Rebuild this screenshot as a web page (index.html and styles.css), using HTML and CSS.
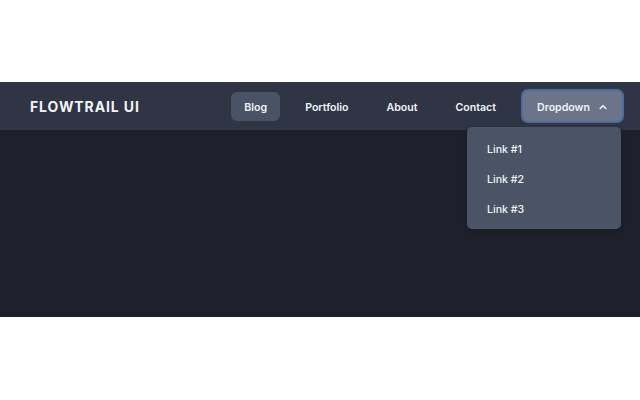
FILE: index.html
```html
<!DOCTYPE html>
<html>
<head>
<meta charset="utf-8">
<link rel="stylesheet" href="styles.css">
</head>
<body>
<div class="stage">
  <nav class="nav">
    <div class="logo">FLOWTRAIL UI</div>
    <ul class="links">
      <li><a class="link active">Blog</a></li>
      <li><a class="link">Portfolio</a></li>
      <li><a class="link">About</a></li>
      <li><a class="link">Contact</a></li>
      <li class="dd">
        <button class="dd-btn">Dropdown
          <svg class="chev" width="8" height="6" viewBox="0 0 8 6"><path d="M1.2 4.5 L4 1.7 L6.8 4.5" fill="none" stroke="#f1f3f6" stroke-width="1.6" stroke-linecap="round" stroke-linejoin="round"/></svg>
        </button>
        <div class="menu">
          <a class="menu-item">Link #1</a>
          <a class="menu-item">Link #2</a>
          <a class="menu-item">Link #3</a>
        </div>
      </li>
    </ul>
  </nav>
  <main class="content"></main>
</div>
</body>
</html>
```
FILE: styles.css
```css
html, body {
  margin: 0;
  padding: 0;
  background: #ffffff;
}
body {
  padding-top: 82px;
  font-family: Inter, "Liberation Sans", sans-serif;
}
.stage {
  display: flex;
  flex-direction: column;
}
.nav {
  height: 48px;
  background: #2f3545;
  display: flex;
  align-items: center;
  justify-content: space-between;
  padding: 0 16px 0 30px;
  position: relative;
  z-index: 2;
}
.logo {
  color: #f2f3f5;
  font-weight: 700;
  font-size: 14px;
  letter-spacing: 0.9px;
  padding-top: 1px;
}
.links {
  list-style: none;
  margin: 0;
  padding: 0;
  display: flex;
  align-items: center;
  gap: 12px;
}
.link {
  display: block;
  color: #f1f3f6;
  font-size: 10.6px;
  font-weight: 600;
  padding: 9px 13px 7px;
  line-height: 13px;
  border-radius: 6px;
}
.link.active {
  background: #4a5265;
}
.dd {
  position: relative;
}
.dd-btn {
  display: flex;
  align-items: center;
  gap: 9px;
  font-family: inherit;
  color: #f1f3f6;
  font-size: 10.6px;
  font-weight: 600;
  line-height: 13px;
  background: #6b7489;
  border: 2px solid #4b6c9c;
  border-radius: 7px;
  padding: 9px 15px 7px 14px;
  height: 34px;
}
.chev {
  display: block;
  margin-top: -1px;
}
.menu {
  position: absolute;
  right: 3px;
  top: 38px;
  width: 154px;
  background: #4b5366;
  border-radius: 5px;
  padding: 8px 0 4px;
  box-shadow: 0 2px 6px rgba(0,0,0,0.2);
}
.menu-item {
  display: block;
  color: #f1f3f6;
  font-size: 10.6px;
  font-weight: 500;
  line-height: 30px;
  padding: 0 20px;
}
.content {
  height: 187px;
  background: #1e212b;
}
```
